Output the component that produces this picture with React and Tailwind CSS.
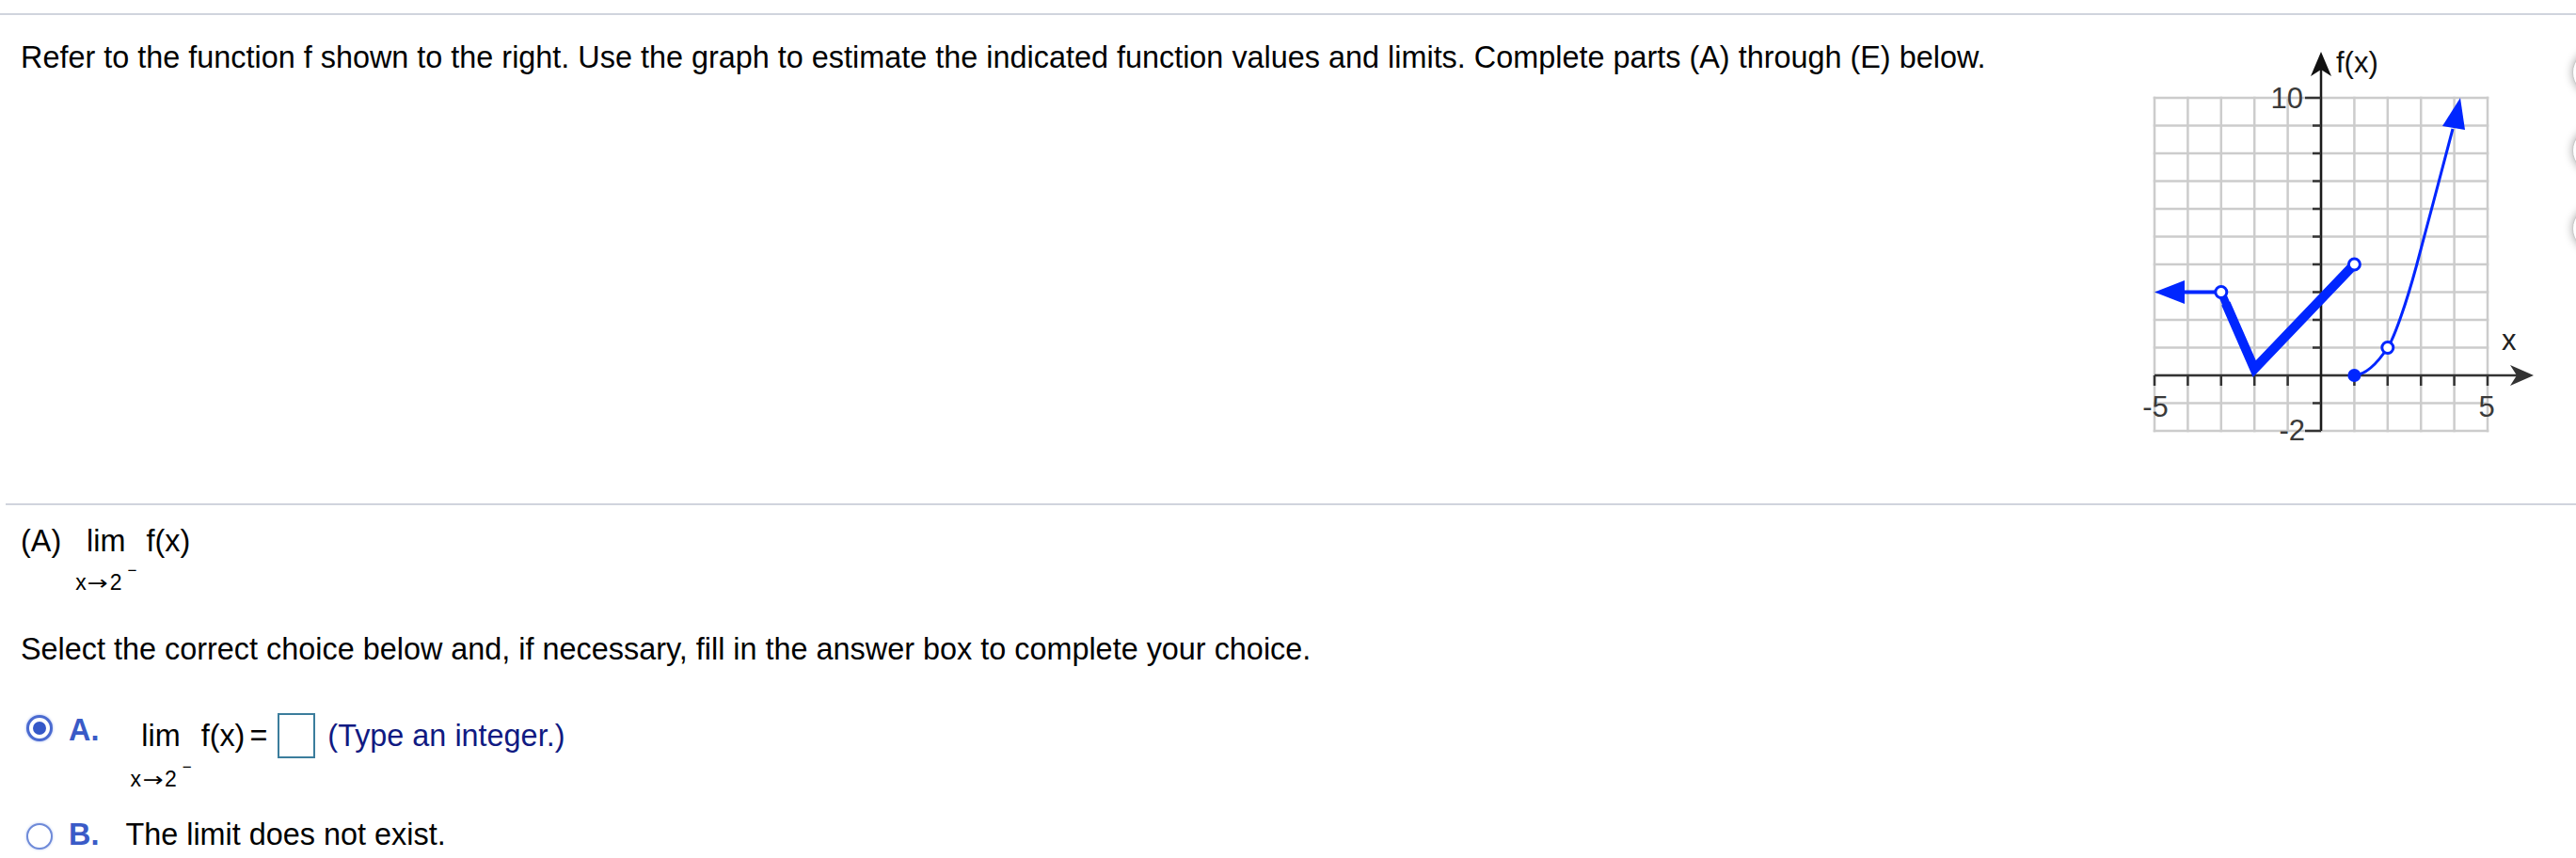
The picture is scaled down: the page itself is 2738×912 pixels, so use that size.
import React from 'react'

const BLUE = '#0026ff'

function Graph() {
  const X = (x) => 50 + (x + 5) * 35.4
  const Y = (y) => 64 + (10 - y) * 29.5
  const xs = [-5, -4, -3, -2, -1, 0, 1, 2, 3, 4, 5]
  const ys = [-2, -1, 0, 1, 2, 3, 4, 5, 6, 7, 8, 9, 10]
  const font = 'Liberation Sans, Arial, sans-serif'

  return (
    <svg width="470" height="440" viewBox="0 0 470 440" className="mt-[24px] mr-[28px] shrink-0">
      {/* grid */}
      <g stroke="#cccccc" strokeWidth="2.5" strokeLinecap="square">
        {xs.map((x) => (
          <line key={'gx' + x} x1={X(x)} y1={Y(10)} x2={X(x)} y2={Y(-2)} />
        ))}
        {ys.map((y) => (
          <line key={'gy' + y} x1={X(-5)} y1={Y(y)} x2={X(5)} y2={Y(y)} />
        ))}
      </g>

      {/* axes */}
      <line x1={X(-5)} y1={Y(0)} x2="438" y2={Y(0)} stroke="#333" strokeWidth="2.5" />
      <polygon points="453,359 428,348 435,359 428,370" fill="#333" />
      <line x1={X(0)} y1={Y(-2)} x2={X(0)} y2="30" stroke="#1a1a1a" strokeWidth="2.5" />
      <polygon points="227,15 216,41 227,34 238,41" fill="#111" />

      <g stroke="#333" strokeWidth="2.5">
        {xs.filter((x) => x !== 0).map((x) => (
          <line key={'tx' + x} x1={X(x)} y1={Y(0)} x2={X(x)} y2={Y(0) + 11} />
        ))}
        {ys.filter((y) => y !== 0).map((y) => (
          <line key={'ty' + y} x1={y === 10 || y === -2 ? 210 : 218} y1={Y(y)} x2={X(0)} y2={Y(y)} />
        ))}
      </g>

      {/* labels */}
      <g fontFamily={font} fontSize="31" fill="#3a3a3a">
        <text x="208" y="75" textAnchor="end">10</text>
        <text x="210" y="428" textAnchor="end">-2</text>
        <text x="51" y="403" textAnchor="middle">-5</text>
        <text x="403" y="403" textAnchor="middle">5</text>
        <text x="243" y="37" fill="#111">f(x)</text>
        <text x="419" y="332" fill="#222">x</text>
      </g>

      {/* left piece */}
      <line x1="80" y1={Y(3)} x2={X(-3)} y2={Y(3)} stroke={BLUE} strokeWidth="4" />
      <polygon points={`50,${Y(3)} 82,258 82,283`} fill={BLUE} />
      <line x1={X(-3)} y1={Y(3)} x2={X(-2)} y2="352" stroke={BLUE} strokeWidth="8.5" />
      <polyline
        points={`${X(-3) + 5},${Y(3) + 12} ${X(-2)},352 ${X(1)},${Y(4)}`}
        fill="none"
        stroke={BLUE}
        strokeWidth="10"
        strokeLinejoin="miter"
        strokeMiterlimit="6"
      />

      {/* right piece */}
      <path
        d={`M ${X(1)} ${Y(0)} C 276 358, 289 343, ${X(2)} ${Y(1)} C 305 319, 318 281, 328.3 243 C 338.5 206, 359 126, 367 97`}
        fill="none"
        stroke={BLUE}
        strokeWidth="3"
      />
      <polygon points="375,64 356,94 380,98" fill={BLUE} />

      {/* points */}
      <circle cx={X(1)} cy={Y(0)} r="7" fill={BLUE} />
      <g fill="#fff" stroke={BLUE} strokeWidth="3">
        <circle cx={X(-3)} cy={Y(3)} r="6" />
        <circle cx={X(1)} cy={Y(4)} r="6" />
        <circle cx={X(2)} cy={Y(1)} r="6" />
      </g>
    </svg>
  )
}

// "x→2⁻" written under lim
function Approach({ className }) {
  return (
    <span className={'text-[23px] leading-[28px] ' + className}>
      x
      <span className="inline-block w-[25px] text-center font-['DejaVu_Sans',sans-serif] text-[21px]">
        <span className="inline-block scale-x-125">→</span>
      </span>
      2<span className="ml-[6px] align-[15px] text-[17px] leading-[0]">−</span>
    </span>
  )
}

export default function App() {
  return (
    <div className="relative min-h-screen w-full overflow-hidden bg-white font-['Liberation_Sans',Arial,sans-serif] text-[32.4px] leading-[38px] text-black">
      <div className="pt-[14px]">
        <div className="border-t-2 border-[#d0d4dd]" />

        <div className="flex h-[519px] justify-between">
          <p className="pl-[22px] pt-[26px]">
            Refer to the function f shown to the right. Use the graph to estimate the indicated function values and limits. Complete parts (A) through (E) below.
          </p>
          <Graph />
        </div>

        <div className="ml-[6px] border-t-2 border-[#d0d4dd]" />

        {/* part A */}
        <div className="flex items-start pl-[22px] pt-[19px]">
          <span>(A)</span>
          <div className="ml-[15px] flex flex-col items-center">
            <span>lim</span>
            <Approach className="mt-[11px]" />
          </div>
          <span className="ml-[10px]">f(x)</span>
        </div>

        <p className="mt-[37px] pl-[22px]">
          Select the correct choice below and, if necessary, fill in the answer box to complete your choice.
        </p>

        {/* choice A */}
        <div className="mt-[48px] flex items-start pl-[28px]">
          <div className="mt-[3px] flex h-[28px] w-[28px] items-center justify-center rounded-full border-[3px] border-[#4a6ad0] bg-white shadow-[0_0_3px_#9fb4ee]">
            <div className="h-[14px] w-[14px] rounded-full bg-[#3558c8]" />
          </div>
          <span className="ml-[17px] font-bold text-[#3a5bc7]">A.</span>
          <div className="ml-[33px] mt-[6px] flex flex-col items-center">
            <span>lim</span>
            <Approach className="mt-[13px]" />
          </div>
          <span className="ml-[10px] mt-[6px]">f(x)</span>
          <span className="ml-[5px] mt-[6px]">=</span>
          <div className="ml-[11px] mt-[1px] h-[48px] w-[40px] border-2 border-[#3b7d9c] bg-white" />
          <span className="ml-[13px] mt-[6px] text-[#101a82]">(Type an integer.)</span>
        </div>

        {/* choice B */}
        <div className="mt-[25px] flex items-start pl-[28px]">
          <div className="mt-[7px] h-[28px] w-[28px] rounded-full border-2 border-[#6e8ad8] bg-white shadow-[0_0_3px_#b5c5f0]" />
          <span className="ml-[17px] font-bold text-[#3a5bc7]">B.</span>
          <span className="ml-[28px]">The limit does not exist.</span>
        </div>
      </div>

      {/* side buttons cut off at the right edge */}
      <div className="absolute left-[2734px] top-[53px] flex flex-col gap-[35px]">
        <div className="h-[48px] w-[48px] rounded-full border border-[#c8c8c8] bg-white shadow-[0_0_10px_rgba(0,0,0,0.35)]" />
        <div className="h-[48px] w-[48px] rounded-full border border-[#c8c8c8] bg-white shadow-[0_0_10px_rgba(0,0,0,0.35)]" />
        <div className="h-[48px] w-[48px] rounded-full border border-[#c8c8c8] bg-white shadow-[0_0_10px_rgba(0,0,0,0.35)]" />
      </div>
    </div>
  )
}
